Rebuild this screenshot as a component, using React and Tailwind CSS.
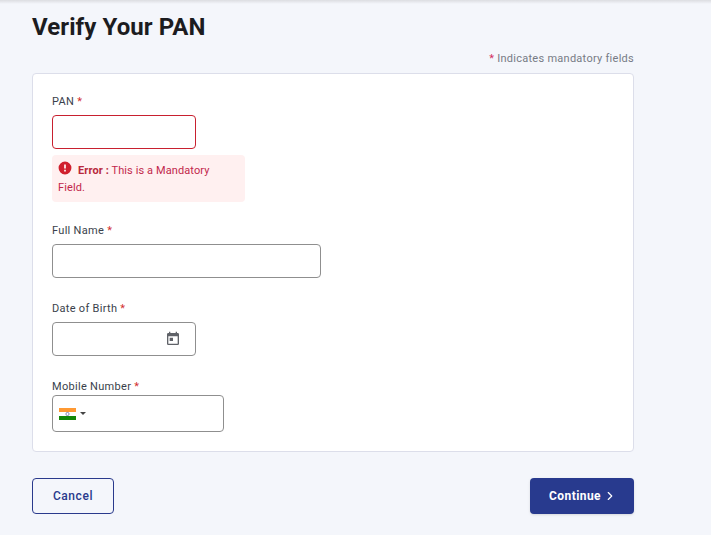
import React from 'react';
import { ChevronRight } from 'lucide-react';

const Label = ({ children }) => (
  <label className="block h-[14px] text-[11px] leading-[14px] tracking-[0.3px] text-[#3a3f4b]">
    {children} <span className="text-[#d32f2f]">*</span>
  </label>
);

const boxClass = 'block h-[34px] rounded-[4px] border border-[#8f8f8f] bg-white';

const App = () => {
  return (
    <div className="relative h-[535px] w-[711px] overflow-hidden bg-[#f4f6fb] font-['Roboto',sans-serif]">
      {/* top bar shadow */}
      <div className="absolute inset-x-0 top-0 h-[4px] bg-gradient-to-b from-[#dcdde1] to-[#f4f6fb]" />

      <div className="ml-[32px] w-[602px]">
        <h1 className="pt-[13px] text-[24px] font-bold leading-[28px] tracking-[0.08px] text-[#1c1c1f]">Verify Your PAN</h1>
        <p className="mt-[11px] text-right text-[11px] leading-[14px] tracking-[0.27px] text-[#777b85]">
          <span className="text-[#d32f5f]">*</span> Indicates mandatory fields
        </p>

        {/* form card */}
        <div className="mt-[7px] h-[379px] rounded-[4px] border border-[#dcdeea] bg-white pl-[19px] pt-[21px]">
          <Label>PAN</Label>
          <div className="mt-[6px] h-[34px] w-[144px] rounded-[4px] border border-[#c8202f] bg-white" />
          <div className="mt-[6px] h-[47px] w-[193px] rounded-[4px] bg-[#fff0f0] px-[6px] pt-[6px] text-[11px] leading-[17px] tracking-[0.1px] text-[#c2274b]">
            <div className="flex items-center">
              <svg width="14" height="14" viewBox="0 0 24 24" className="mb-[5px] mr-[6px] shrink-0" fill="#d0202e">
                <path d="M12 1a11 11 0 1 0 0 22 11 11 0 0 0 0-22zm1.5 17h-3v-3h3v3zm0-5h-3V6h3v7z" />
              </svg>
              <span><b className="font-bold text-[#b8283c]">Error :</b> This is a Mandatory</span>
            </div>
            <div className="-mt-[1px]">Field.</div>
          </div>

          <div className="mt-[22px]"><Label>Full Name</Label></div>
          <div className={`mt-[6px] w-[269px] ${boxClass}`} />

          <div className="mt-[24px]"><Label>Date of Birth</Label></div>
          <div className={`mt-[6px] flex w-[144px] items-center justify-end pr-[14px] ${boxClass}`}>
            <svg width="16" height="16" viewBox="0 0 24 24" fill="#5f6268">
              <path d="M19 3h-1V1h-2v2H8V1H6v2H5a2 2 0 0 0-2 2v14a2 2 0 0 0 2 2h14a2 2 0 0 0 2-2V5a2 2 0 0 0-2-2zm0 16H5V8h14v11zM7 10h5v5H7v-5z" />
            </svg>
          </div>

          <div className="mt-[24px]"><Label>Mobile Number</Label></div>
          <div className="mt-[1px] flex h-[37px] w-[172px] items-center rounded-[4px] border border-[#8f8f8f] bg-white pl-[6px]">
            <svg width="17" height="12" viewBox="0 0 17 12">
              <rect width="17" height="4" fill="#ff9933" />
              <rect y="4" width="17" height="4" fill="#ffffff" />
              <rect y="8" width="17" height="4" fill="#138808" />
              <circle cx="8.5" cy="6" r="1.6" fill="none" stroke="#5a5a9a" strokeWidth="0.7" />
            </svg>
            <span className="ml-[4px] h-0 w-0 border-x-[3px] border-t-[3px] border-x-transparent border-t-[#444]" />
          </div>
        </div>

        {/* actions */}
        <div className="mt-[26px] flex items-start justify-between">
          <button className="h-[36px] w-[82px] rounded-[4px] border border-[#2a3a8c] bg-transparent text-[12px] font-medium tracking-[0.55px] text-[#2a3a8c]">
            Cancel
          </button>
          <button className="flex h-[36px] w-[104px] items-center justify-center rounded-[4px] bg-[#283a8e] pl-[2px] text-[12px] font-bold tracking-[0.45px] text-white shadow-sm">
            Continue
            <ChevronRight size={14} strokeWidth={2} className="ml-[2px]" />
          </button>
        </div>
      </div>
    </div>
  );
};

export default App;
